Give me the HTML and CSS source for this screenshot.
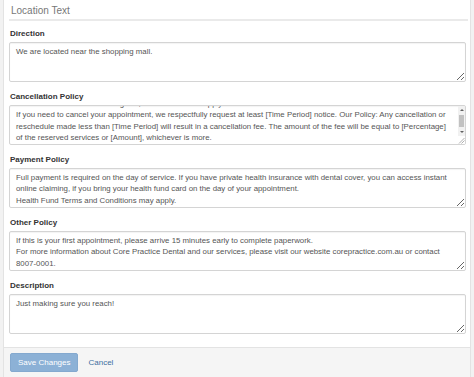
FILE: index.html
```html
<!DOCTYPE html>
<html lang="en">
<head>
    <meta charset="UTF-8">
    <title>Location Text</title>
    <link rel="stylesheet" href="styles.css">
</head>
<body>
    <div class="panel">
        <div class="panel-body">
            <h3 class="panel-title">Location Text</h3>

            <div class="form-group">
                <label for="direction">Direction</label>
                <textarea id="direction" class="form-control">We are located near the shopping mall.</textarea>
            </div>

            <div class="form-group">
                <label for="cancellation">Cancellation Policy</label>
                <div class="form-control scroll-box">
                    <textarea id="cancellation" class="scroll-text">If less than 24 hours notice is given, cancellation fees apply. Our number is: 8007-0001.
If you need to cancel your appointment, we respectfully request at least [Time Period] notice. Our Policy: Any cancellation or
reschedule made less than [Time Period] will result in a cancellation fee. The amount of the fee will be equal to [Percentage]
of the reserved services or [Amount], whichever is more.</textarea>
                    <div class="fake-scrollbar">
                        <span class="sb-btn sb-up"></span>
                        <span class="sb-track"><span class="sb-thumb"></span></span>
                        <span class="sb-btn sb-down"></span>
                        <span class="sb-grip">
                            <svg width="7" height="7" viewBox="0 0 7 7">
                                <path d="M1 6.5 L6.5 1 M3.5 6.5 L6.5 3.5" stroke="#9a9a9a" stroke-width="0.8" fill="none"/>
                            </svg>
                        </span>
                    </div>
                </div>
            </div>

            <div class="form-group">
                <label for="payment">Payment Policy</label>
                <textarea id="payment" class="form-control">Full payment is required on the day of service. If you have private health insurance with dental cover, you can access instant online claiming, if you bring your health fund card on the day of your appointment.
Health Fund Terms and Conditions may apply.</textarea>
            </div>

            <div class="form-group">
                <label for="other">Other Policy</label>
                <textarea id="other" class="form-control">If this is your first appointment, please arrive 15 minutes early to complete paperwork.
For more information about Core Practice Dental and our services, please visit our website corepractice.com.au or contact 8007-0001.</textarea>
            </div>

            <div class="form-group">
                <label for="description">Description</label>
                <textarea id="description" class="form-control">Just making sure you reach!</textarea>
            </div>
        </div>

        <div class="panel-footer">
            <button class="btn btn-primary" disabled>Save Changes</button>
            <a href="#" class="btn-link">Cancel</a>
        </div>
    </div>

    <script src="script.js"></script>
</body>
</html>
```

FILE: styles.css
```css
body {
    font-family: "Liberation Sans", Arial, sans-serif;
    font-size: 8px;
    margin: 0;
    padding: 0;
    color: #333;
    background-color: #f2f2f2;
}

.panel {
    margin-left: 3px;
    width: 466px;
    height: 377px;
    background-color: #fff;
    border-left: 1px solid #e3e3e3;
    border-right: 1px solid #e3e3e3;
}

.panel-body {
    padding: 0 2px 4px 5px;
}

.panel-title {
    margin: 0 0 7px 0;
    padding: 4px 0 2px 2px;
    font-size: 10px;
    line-height: 13px;
    font-weight: normal;
    color: #777;
    border-bottom: 2px solid #eaeaea;
}

.form-group {
    margin-bottom: 9px;
}

.form-group label {
    display: block;
    margin: 0 0 3px 1px;
    font-weight: bold;
    line-height: 11px;
    color: #333;
}

.form-control {
    display: block;
    box-sizing: border-box;
    width: 457px;
    height: 40px;
    margin: 0;
    padding: 3px 6px;
    font-family: "Liberation Sans", Arial, sans-serif;
    font-size: 7.85px;
    line-height: 11.4px;
    color: #555;
    background-color: #fff;
    border: 1px solid #d4d4d4;
    border-radius: 2px;
    box-shadow: inset 0 1px 1px rgba(0, 0, 0, 0.05);
    overflow: hidden;
}

/* cancellation box: textarea plus a drawn scrollbar */
.scroll-box {
    display: flex;
    padding: 0;
}

.scroll-text {
    flex: 1;
    min-width: 0;
    margin: 0;
    border: none;
    outline: none;
    resize: none;
    overflow: hidden;
    padding: 3px 4px 3px 6px;
    font-family: inherit;
    font-size: inherit;
    line-height: inherit;
    color: inherit;
    background: transparent;
}

.fake-scrollbar {
    flex: 0 0 7px;
    display: flex;
    flex-direction: column;
    background-color: #f1f1f1;
}

.sb-btn {
    height: 8px;
    display: flex;
    align-items: center;
    justify-content: center;
}

.sb-up::before,
.sb-down::before {
    content: "";
    width: 0;
    height: 0;
    border-left: 2px solid transparent;
    border-right: 2px solid transparent;
}

.sb-up::before {
    border-bottom: 2px solid #606060;
}

.sb-down::before {
    border-top: 2px solid #606060;
}

.sb-track {
    flex: 1;
    padding: 1px 0;
    display: flex;
}

.sb-thumb {
    flex: 1;
    margin: 0 1px;
    background-color: #c1c1c1;
}

.sb-grip {
    height: 8px;
    background-color: #fff;
    display: flex;
    align-items: flex-end;
    justify-content: flex-end;
}

.sb-grip svg {
    display: block;
}

.panel-footer {
    padding: 5px 5px;
    background-color: #f5f5f5;
    border-top: 1px solid #e3e3e3;
    display: flex;
    align-items: center;
    gap: 10px;
    height: 30px;
    box-sizing: border-box;
}

.btn {
    font-family: "Liberation Sans", Arial, sans-serif;
    font-size: 8px;
    line-height: 11px;
    padding: 3px 7px;
    height: 19px;
    border-radius: 2px;
    margin-left: 1px;
}

.btn-primary {
    color: #fff;
    background-color: #8cb1d6;
    border: 1px solid #84a9cf;
}

.btn-link {
    color: #3f6f9f;
    text-decoration: none;
}
```

FILE: script.js
```js
document.addEventListener('DOMContentLoaded', () => {
    const box = document.getElementById('cancellation');
    box.scrollTop = 11.4;
});
```
